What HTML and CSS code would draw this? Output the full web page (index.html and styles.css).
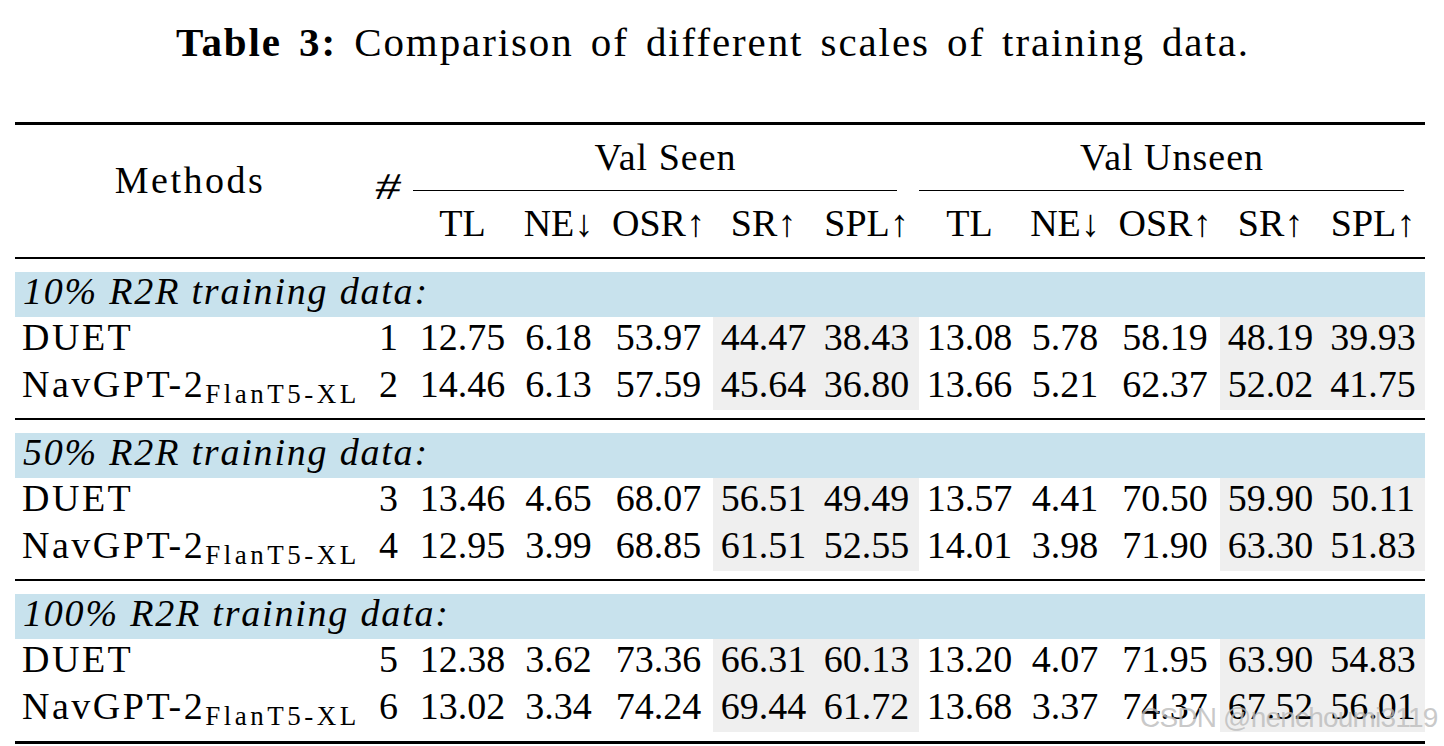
FILE: index.html
```html
<!DOCTYPE html>
<html lang="en">
<head>
<meta charset="utf-8">
<title>Table 3</title>
<link rel="stylesheet" href="styles.css">
</head>
<body>
<div class="page">
  <div class="caption"><b>Table 3:</b> Comparison of different scales of training data.</div>
  <table class="results">
    <colgroup>
      <col class="c-method"><col class="c-num">
      <col class="c-tl"><col class="c-ne"><col class="c-osr"><col class="c-sr"><col class="c-spl">
      <col class="c-tl"><col class="c-ne2"><col class="c-osr2"><col class="c-sr"><col class="c-spl2">
    </colgroup>
    <thead>
      <tr class="h1">
        <th rowspan="2" class="span-head label">Methods</th>
        <th rowspan="2" class="span-head"><span class="hash">#</span></th>
        <th colspan="5" class="group"><div class="group-label">Val Seen</div><div class="cmid cmid-seen"></div></th>
        <th colspan="5" class="group"><div class="group-label">Val Unseen</div><div class="cmid cmid-unseen"></div></th>
      </tr>
      <tr class="h2">
        <th>TL</th><th>NE↓</th><th>OSR↑</th><th>SR↑</th><th>SPL↑</th>
        <th>TL</th><th>NE↓</th><th>OSR↑</th><th>SR↑</th><th>SPL↑</th>
      </tr>
    </thead>
    <tbody>
      <tr class="gap"><td colspan="12"></td></tr>
      <tr class="band"><td colspan="12">10% R2R training data:</td></tr>
      <tr class="row first">
        <td class="method label">DUET</td><td>1</td>
        <td>12.75</td><td>6.18</td><td>53.97</td><td class="hl">44.47</td><td class="hl">38.43</td>
        <td>13.08</td><td>5.78</td><td>58.19</td><td class="hl">48.19</td><td class="hl">39.93</td>
      </tr>
      <tr class="row second">
        <td class="method label">NavGPT-2<span class="sub">FlanT5-XL</span></td><td>2</td>
        <td>14.46</td><td>6.13</td><td>57.59</td><td class="hl">45.64</td><td class="hl">36.80</td>
        <td>13.66</td><td>5.21</td><td>62.37</td><td class="hl">52.02</td><td class="hl">41.75</td>
      </tr>
      <tr class="end"><td colspan="12"></td></tr>

      <tr class="gap"><td colspan="12"></td></tr>
      <tr class="band"><td colspan="12">50% R2R training data:</td></tr>
      <tr class="row first">
        <td class="method label">DUET</td><td>3</td>
        <td>13.46</td><td>4.65</td><td>68.07</td><td class="hl">56.51</td><td class="hl">49.49</td>
        <td>13.57</td><td>4.41</td><td>70.50</td><td class="hl">59.90</td><td class="hl">50.11</td>
      </tr>
      <tr class="row second">
        <td class="method label">NavGPT-2<span class="sub">FlanT5-XL</span></td><td>4</td>
        <td>12.95</td><td>3.99</td><td>68.85</td><td class="hl">61.51</td><td class="hl">52.55</td>
        <td>14.01</td><td>3.98</td><td>71.90</td><td class="hl">63.30</td><td class="hl">51.83</td>
      </tr>
      <tr class="end"><td colspan="12"></td></tr>

      <tr class="gap"><td colspan="12"></td></tr>
      <tr class="band"><td colspan="12">100% R2R training data:</td></tr>
      <tr class="row first">
        <td class="method label">DUET</td><td>5</td>
        <td>12.38</td><td>3.62</td><td>73.36</td><td class="hl">66.31</td><td class="hl">60.13</td>
        <td>13.20</td><td>4.07</td><td>71.95</td><td class="hl">63.90</td><td class="hl">54.83</td>
      </tr>
      <tr class="row second">
        <td class="method label">NavGPT-2<span class="sub">FlanT5-XL</span></td><td>6</td>
        <td>13.02</td><td>3.34</td><td>74.24</td><td class="hl">69.44</td><td class="hl">61.72</td>
        <td>13.68</td><td>3.37</td><td>74.37</td><td class="hl">67.52</td><td class="hl">56.01</td>
      </tr>
      <tr class="last-gap"><td colspan="12"></td></tr>
    </tbody>
  </table>
  <div class="watermark">CSDN @nenchoumi3119</div>
</div>
</body>
</html>
```

FILE: styles.css
```css
html, body {
  margin: 0;
  padding: 0;
  background: #ffffff;
}

.page {
  position: relative;
  width: 1444px;
  height: 746px;
  box-sizing: border-box;
  padding: 21px 19px 0 15px;
  font-family: "Liberation Serif", "Times New Roman", serif;
  font-size: 38px;
  color: #000;
  overflow: hidden;
}

.caption {
  width: 1410px;
  font-size: 41px;
  line-height: 42px;
  text-align: center;
  margin-bottom: 59px;
  letter-spacing: 1.9px;
  word-spacing: 5px;
  padding-right: 14px;
  box-sizing: border-box;
}

.caption b {
  font-weight: bold;
}

.results {
  width: 1410px;
  table-layout: fixed;
  border-collapse: separate;
  border-spacing: 0;
  border-top: 3px solid #000;
  border-bottom: 3px solid #000;
}

.c-method { width: 350px; }
.c-num { width: 47px; }
.c-tl { width: 101px; }
.c-ne { width: 91px; }
.c-osr { width: 109px; }
.c-sr { width: 101px; }
.c-spl { width: 105px; }
.c-ne2 { width: 90px; }
.c-osr2 { width: 110px; }
.c-spl2 { width: 104px; }

.results th,
.results td {
  padding: 0;
  font-weight: normal;
  text-align: center;
  white-space: nowrap;
}

.label {
  letter-spacing: 2.5px;
}

.span-head {
  vertical-align: top;
  padding-top: 34px !important;
  line-height: 42px;
  border-bottom: 2px solid #000;
}

.hash {
  display: inline-block;
  font-size: 38px;
  line-height: 42px;
  transform: scaleX(1.35) skewX(-8deg);
  vertical-align: -6px;
}

.group {
  vertical-align: top;
  padding-top: 11px !important;
}

.group-label {
  line-height: 42px;
  letter-spacing: 1px;
}

.cmid {
  margin-top: 12px;
  height: 0;
  border-top: 1px solid #000;
}

.cmid-seen { margin-left: 1px; margin-right: 22px; }
.cmid-unseen { margin-left: 0; margin-right: 21px; }

.h2 th {
  line-height: 42px;
  padding-top: 11px;
  padding-bottom: 13px;
  border-bottom: 2px solid #000;
}

.gap td {
  height: 13px;
  line-height: 0;
  font-size: 0;
}

.end td {
  height: 8px;
  line-height: 0;
  font-size: 0;
  border-bottom: 2px solid #000;
}

.last-gap td {
  height: 9px;
  line-height: 0;
  font-size: 0;
}

.band td {
  background: #c8e2ed;
  font-style: italic;
  text-align: left;
  line-height: 38px;
  padding: 0 0 7px 8px;
  letter-spacing: 1.8px;
}

.row td {
  line-height: 40px;
  padding-bottom: 6px;
}

.row.second td {
  padding-top: 1px;
}

.row td.method {
  text-align: left;
  padding-left: 7px;
}

.row td.hl {
  background: #efefef;
}

.sub {
  font-size: 27px;
  letter-spacing: 3.5px;
  vertical-align: -6px;
  line-height: 0;
}

.watermark {
  position: absolute;
  left: 1140px;
  top: 704px;
  font-family: "Liberation Sans", Arial, sans-serif;
  font-size: 28px;
  line-height: 28px;
  letter-spacing: -0.8px;
  color: rgba(187, 187, 187, 0.8);
  white-space: nowrap;
}
```
